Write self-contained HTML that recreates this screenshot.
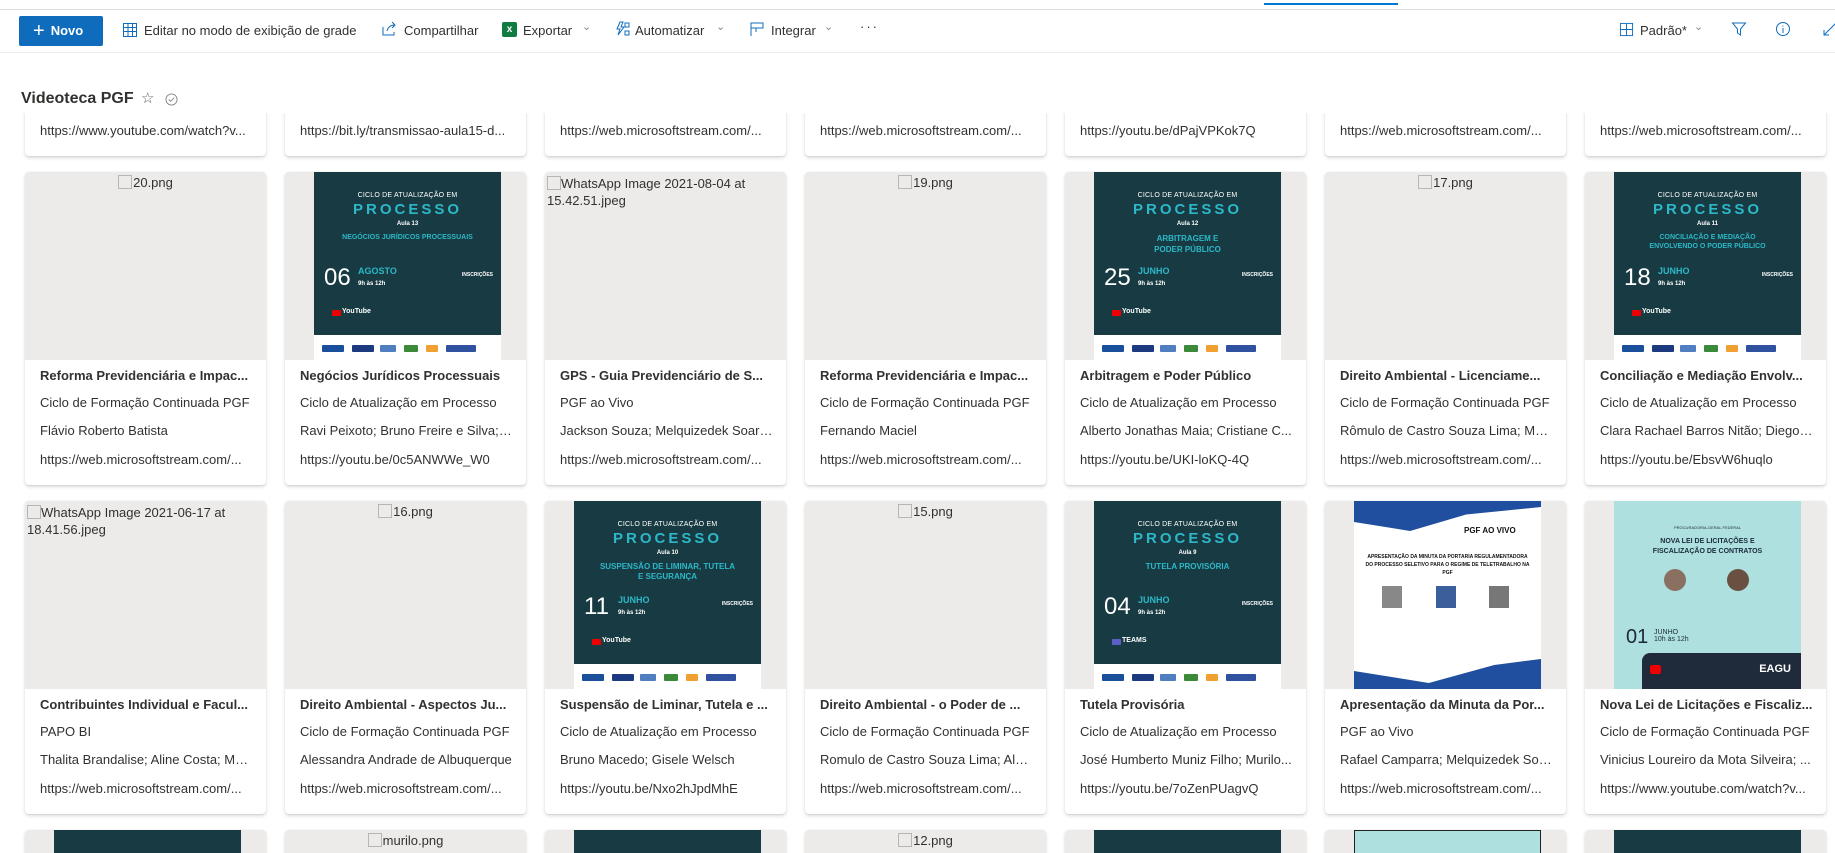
<!DOCTYPE html>
<html><head><meta charset="utf-8">
<style>
*{box-sizing:border-box;margin:0;padding:0}
html,body{width:1835px;height:853px;overflow:hidden}
body{background:#fff;font-family:"Liberation Sans","Segoe UI",sans-serif;color:#323130;position:relative}
#wrap{position:absolute;left:0;top:0;width:1835px;height:853px;overflow:hidden}
.hdr{position:absolute;left:0;top:0;width:1835px;height:113px;background:#fff;z-index:5}
.topline{position:absolute;left:0;top:9px;width:1835px;height:1px;background:#e1dfdd}
.cmdline{position:absolute;left:0;top:52px;width:1835px;height:1px;background:#edebe9}
.tab{position:absolute;left:1264px;top:3px;width:134px;height:2px;background:#0078d4}
.novo{position:absolute;left:19px;top:16px;width:84px;height:30px;background:#0f6cbd;border-radius:2px;color:#fff;font-size:13px;font-weight:bold;line-height:30px;padding-left:14px}
.novo span{font-size:20px;font-weight:normal;vertical-align:-2px;margin-right:6px}
.ci{position:absolute;top:23px;font-size:13px;color:#323130;line-height:16px;white-space:nowrap}
.chev{position:absolute;top:20px;font-size:11px;color:#8a8886}
.ttl{position:absolute;left:21px;top:90px;font-size:16px;font-weight:600;color:#323130}
.card{position:absolute;width:241px;height:313px;background:#fff;border-radius:4px;box-shadow:0 1.6px 3.6px rgba(0,0,0,.14),0 .3px .9px rgba(0,0,0,.11);overflow:hidden}
.card.last{height:23px;border-radius:4px 4px 0 0}
.im{position:absolute;left:0;top:0;width:241px;height:188px;background:#edebe9}
.ph{position:absolute;top:3px;left:0;width:100%;text-align:center;font-size:13px;color:#323130}
.ph i{display:inline-block;width:14px;height:14px;border:1px solid #b8b6b4;vertical-align:-2px;margin-right:1px}
.phl{position:absolute;top:3px;left:2px;width:230px;font-size:13px;line-height:17px;color:#323130}
.phl i{display:inline-block;width:14px;height:14px;border:1px solid #b8b6b4;vertical-align:-2px}
.t{position:absolute;left:15px;width:213px;font-size:13px;white-space:nowrap;overflow:hidden;text-overflow:ellipsis;line-height:18px}
.t1{top:195px;font-weight:bold}
.t2{top:222px}.t3{top:250px}.t4{top:279px}
.p{position:absolute;left:29px;top:0;width:187px;height:188px;background:#183a42;overflow:hidden;text-align:center;color:#fff}
.p .a{position:absolute;top:20px;width:100%;font-size:7px;letter-spacing:.2px}
.p .b{position:absolute;top:29px;width:100%;font-size:15px;font-weight:bold;color:#2cb8c8;letter-spacing:3px}
.p .c{position:absolute;top:49px;width:100%;font-size:6px;font-weight:bold}
.p .d{position:absolute;top:61px;width:100%;font-size:7px;font-weight:bold;color:#2cb8c8;line-height:9px}
.p .e{position:absolute;left:10px;top:92px;font-size:24px;color:#fff}
.p .f{position:absolute;left:44px;top:94px;font-size:9px;color:#2cb8c8;font-weight:bold;text-align:left;line-height:11px}
.p .f small{color:#fff;font-size:6px}
.p .yt{position:absolute;left:18px;top:138px;width:9px;height:6px;background:#e00;border-radius:1px}
.p .ytt{position:absolute;left:28px;top:136px;font-size:7px;font-weight:bold}
.p .ins{position:absolute;right:8px;top:100px;font-size:5px;font-weight:bold}
.p .strip{position:absolute;left:0;bottom:0;width:100%;height:25px;background:#fff}
.strip b{position:absolute;top:10px;height:7px;border-radius:1px}
</style></head><body><div id="wrap">
<div class="hdr">
<div class="topline"></div><div class="tab"></div><div class="cmdline"></div>
<div class="novo"><span>+</span>Novo</div>
<svg style="position:absolute;left:122px;top:22px" width="16" height="16" viewBox="0 0 16 16" fill="none" stroke="#0f6cbd"><rect x="1.5" y="1.5" width="13" height="13"/><path d="M1.5 5.5h13M1.5 9.5h13M6 1.5v13M10.5 1.5v13"/></svg>
<div class="ci" style="left:144px">Editar no modo de exibição de grade</div>
<svg style="position:absolute;left:381px;top:21px" width="16" height="16" viewBox="0 0 16 16" fill="none" stroke="#0f6cbd"><path d="M2 6v8h11v-3M6 10c1-4 4-6 8-6M11 1l3 3-3 3"/></svg>
<div class="ci" style="left:404px">Compartilhar</div>
<div style="position:absolute;left:502px;top:22px;width:15px;height:15px;background:#107c41;border-radius:2px;color:#fff;font-size:10px;font-weight:bold;text-align:center;line-height:15px">x</div>
<div class="ci" style="left:523px">Exportar</div><div class="chev" style="left:582px">&#8964;</div>
<svg style="position:absolute;left:615px;top:21px" width="16" height="16" viewBox="0 0 16 16" fill="none" stroke="#0f6cbd"><path d="M5 1L2 8h3l-2 6 6-8H6l2-5zM10 2h4v4h-4zM10 10h4v4h-4z"/></svg>
<div class="ci" style="left:635px">Automatizar</div><div class="chev" style="left:716px">&#8964;</div>
<svg style="position:absolute;left:749px;top:21px" width="16" height="16" viewBox="0 0 16 16" fill="none" stroke="#0f6cbd"><path d="M2 2h12v5H2zM2 7v8M7 7v4"/></svg>
<div class="ci" style="left:771px">Integrar</div><div class="chev" style="left:824px">&#8964;</div>
<div class="ci" style="left:860px;top:19px;letter-spacing:2px">···</div>
<svg style="position:absolute;left:1619px;top:22px" width="15" height="15" viewBox="0 0 16 16" fill="none" stroke="#0f6cbd"><rect x="1.5" y="1.5" width="13" height="13"/><path d="M1.5 8h13M8 1.5v13"/></svg>
<div class="ci" style="left:1640px">Padrão*</div><div class="chev" style="left:1694px">&#8964;</div>
<svg style="position:absolute;left:1731px;top:21px" width="16" height="16" viewBox="0 0 16 16" fill="none" stroke="#0f6cbd"><path d="M1.5 2h13l-5 6v6l-3-2V8z"/></svg>
<svg style="position:absolute;left:1775px;top:21px" width="16" height="16" viewBox="0 0 16 16" fill="none" stroke="#0f6cbd"><circle cx="8" cy="8" r="6.5"/><path d="M8 7v5M8 4.5v1"/></svg>
<svg style="position:absolute;left:1822px;top:21px" width="16" height="16" viewBox="0 0 16 16" fill="none" stroke="#0f6cbd"><path d="M2 14L14 2M2 9v5h5"/></svg>
<div class="ttl">Videoteca PGF</div>
<div style="position:absolute;left:141px;top:89px;font-size:15px;color:#605e5c">☆</div>
<svg style="position:absolute;left:165px;top:93px" width="13" height="13" viewBox="0 0 14 14" fill="none" stroke="#8a8886"><circle cx="7" cy="7" r="6"/><path d="M4 7l2 2 4-4"/></svg>
</div>

<div class="card" style="left:25px;top:-157px"><div class="t t4">https://www.youtube.com/watch?v...</div></div>
<div class="card" style="left:285px;top:-157px"><div class="t t4">https://bit.ly/transmissao-aula15-d...</div></div>
<div class="card" style="left:545px;top:-157px"><div class="t t4">https://web.microsoftstream.com/...</div></div>
<div class="card" style="left:805px;top:-157px"><div class="t t4">https://web.microsoftstream.com/...</div></div>
<div class="card" style="left:1065px;top:-157px"><div class="t t4">https://youtu.be/dPajVPKok7Q</div></div>
<div class="card" style="left:1325px;top:-157px"><div class="t t4">https://web.microsoftstream.com/...</div></div>
<div class="card" style="left:1585px;top:-157px"><div class="t t4">https://web.microsoftstream.com/...</div></div>

<div class="card" style="left:25px;top:172px"><div class="im"><div class="ph"><i></i>20.png</div></div>
<div class="t t1">Reforma Previdenciária e Impac...</div><div class="t t2">Ciclo de Formação Continuada PGF</div><div class="t t3">Flávio Roberto Batista</div><div class="t t4">https://web.microsoftstream.com/...</div></div>
<div class="card" style="left:285px;top:172px"><div class="im"><div class="p"><div class="a">CICLO DE ATUALIZAÇÃO EM</div><div class="b">PROCESSO</div><div class="c">Aula 13</div><div class="d">NEGÓCIOS JURÍDICOS PROCESSUAIS</div><div class="e">06</div><div class="f">AGOSTO<br><small>9h às 12h</small></div><div class="ins">INSCRIÇÕES</div><div class="yt"></div><div class="ytt">YouTube</div><div class="strip"><b style="left:8px;width:22px;background:#1a4f9c"></b><b style="left:38px;width:22px;background:#1b3a80"></b><b style="left:66px;width:16px;background:#4f7fc0"></b><b style="left:90px;width:14px;background:#3a8a3a"></b><b style="left:112px;width:12px;background:#f0a030"></b><b style="left:132px;width:30px;background:#3050a0"></b></div></div></div>
<div class="t t1">Negócios Jurídicos Processuais</div><div class="t t2">Ciclo de Atualização em Processo</div><div class="t t3">Ravi Peixoto; Bruno Freire e Silva; ...</div><div class="t t4">https://youtu.be/0c5ANWWe_W0</div></div>
<div class="card" style="left:545px;top:172px"><div class="im"><div class="phl"><i></i>WhatsApp Image 2021-08-04 at 15.42.51.jpeg</div></div>
<div class="t t1">GPS - Guia Previdenciário de S...</div><div class="t t2">PGF ao Vivo</div><div class="t t3">Jackson Souza; Melquizedek Soare...</div><div class="t t4">https://web.microsoftstream.com/...</div></div>
<div class="card" style="left:805px;top:172px"><div class="im"><div class="ph"><i></i>19.png</div></div>
<div class="t t1">Reforma Previdenciária e Impac...</div><div class="t t2">Ciclo de Formação Continuada PGF</div><div class="t t3">Fernando Maciel</div><div class="t t4">https://web.microsoftstream.com/...</div></div>
<div class="card" style="left:1065px;top:172px"><div class="im"><div class="p"><div class="a">CICLO DE ATUALIZAÇÃO EM</div><div class="b">PROCESSO</div><div class="c">Aula 12</div><div class="d" style="font-size:8px;line-height:11px">ARBITRAGEM E<br>PODER PÚBLICO</div><div class="e">25</div><div class="f">JUNHO<br><small>9h às 12h</small></div><div class="ins">INSCRIÇÕES</div><div class="yt"></div><div class="ytt">YouTube</div><div class="strip"><b style="left:8px;width:22px;background:#1a4f9c"></b><b style="left:38px;width:22px;background:#1b3a80"></b><b style="left:66px;width:16px;background:#4f7fc0"></b><b style="left:90px;width:14px;background:#3a8a3a"></b><b style="left:112px;width:12px;background:#f0a030"></b><b style="left:132px;width:30px;background:#3050a0"></b></div></div></div>
<div class="t t1">Arbitragem e Poder Público</div><div class="t t2">Ciclo de Atualização em Processo</div><div class="t t3">Alberto Jonathas Maia; Cristiane C...</div><div class="t t4">https://youtu.be/UKI-loKQ-4Q</div></div>
<div class="card" style="left:1325px;top:172px"><div class="im"><div class="ph"><i></i>17.png</div></div>
<div class="t t1">Direito Ambiental - Licenciame...</div><div class="t t2">Ciclo de Formação Continuada PGF</div><div class="t t3">Rômulo de Castro Souza Lima; Mar...</div><div class="t t4">https://web.microsoftstream.com/...</div></div>
<div class="card" style="left:1585px;top:172px"><div class="im"><div class="p"><div class="a">CICLO DE ATUALIZAÇÃO EM</div><div class="b">PROCESSO</div><div class="c">Aula 11</div><div class="d">CONCILIAÇÃO E MEDIAÇÃO<br>ENVOLVENDO O PODER PÚBLICO</div><div class="e">18</div><div class="f">JUNHO<br><small>9h às 12h</small></div><div class="ins">INSCRIÇÕES</div><div class="yt"></div><div class="ytt">YouTube</div><div class="strip"><b style="left:8px;width:22px;background:#1a4f9c"></b><b style="left:38px;width:22px;background:#1b3a80"></b><b style="left:66px;width:16px;background:#4f7fc0"></b><b style="left:90px;width:14px;background:#3a8a3a"></b><b style="left:112px;width:12px;background:#f0a030"></b><b style="left:132px;width:30px;background:#3050a0"></b></div></div></div>
<div class="t t1">Conciliação e Mediação Envolv...</div><div class="t t2">Ciclo de Atualização em Processo</div><div class="t t3">Clara Rachael Barros Nitão; Diego ...</div><div class="t t4">https://youtu.be/EbsvW6huqlo</div></div>

<div class="card" style="left:25px;top:501px"><div class="im"><div class="phl"><i></i>WhatsApp Image 2021-06-17 at 18.41.56.jpeg</div></div>
<div class="t t1">Contribuintes Individual e Facul...</div><div class="t t2">PAPO BI</div><div class="t t3">Thalita Brandalise; Aline Costa; Ma...</div><div class="t t4">https://web.microsoftstream.com/...</div></div>
<div class="card" style="left:285px;top:501px"><div class="im"><div class="ph"><i></i>16.png</div></div>
<div class="t t1">Direito Ambiental - Aspectos Ju...</div><div class="t t2">Ciclo de Formação Continuada PGF</div><div class="t t3">Alessandra Andrade de Albuquerque</div><div class="t t4">https://web.microsoftstream.com/...</div></div>
<div class="card" style="left:545px;top:501px"><div class="im"><div class="p"><div class="a">CICLO DE ATUALIZAÇÃO EM</div><div class="b">PROCESSO</div><div class="c">Aula 10</div><div class="d" style="font-size:8px;line-height:10px">SUSPENSÃO DE LIMINAR, TUTELA<br>E SEGURANÇA</div><div class="e">11</div><div class="f">JUNHO<br><small>9h às 12h</small></div><div class="ins">INSCRIÇÕES</div><div class="yt"></div><div class="ytt">YouTube</div><div class="strip"><b style="left:8px;width:22px;background:#1a4f9c"></b><b style="left:38px;width:22px;background:#1b3a80"></b><b style="left:66px;width:16px;background:#4f7fc0"></b><b style="left:90px;width:14px;background:#3a8a3a"></b><b style="left:112px;width:12px;background:#f0a030"></b><b style="left:132px;width:30px;background:#3050a0"></b></div></div></div>
<div class="t t1">Suspensão de Liminar, Tutela e ...</div><div class="t t2">Ciclo de Atualização em Processo</div><div class="t t3">Bruno Macedo; Gisele Welsch</div><div class="t t4">https://youtu.be/Nxo2hJpdMhE</div></div>
<div class="card" style="left:805px;top:501px"><div class="im"><div class="ph"><i></i>15.png</div></div>
<div class="t t1">Direito Ambiental - o Poder de ...</div><div class="t t2">Ciclo de Formação Continuada PGF</div><div class="t t3">Romulo de Castro Souza Lima; Ales...</div><div class="t t4">https://web.microsoftstream.com/...</div></div>
<div class="card" style="left:1065px;top:501px"><div class="im"><div class="p"><div class="a">CICLO DE ATUALIZAÇÃO EM</div><div class="b">PROCESSO</div><div class="c">Aula 9</div><div class="d" style="font-size:8px">TUTELA PROVISÓRIA</div><div class="e">04</div><div class="f">JUNHO<br><small>9h às 12h</small></div><div class="ins">INSCRIÇÕES</div><div class="yt" style="background:#5b5fc7"></div><div class="ytt">TEAMS</div><div class="strip"><b style="left:8px;width:22px;background:#1a4f9c"></b><b style="left:38px;width:22px;background:#1b3a80"></b><b style="left:66px;width:16px;background:#4f7fc0"></b><b style="left:90px;width:14px;background:#3a8a3a"></b><b style="left:112px;width:12px;background:#f0a030"></b><b style="left:132px;width:30px;background:#3050a0"></b></div></div></div>
<div class="t t1">Tutela Provisória</div><div class="t t2">Ciclo de Atualização em Processo</div><div class="t t3">José Humberto Muniz Filho; Murilo...</div><div class="t t4">https://youtu.be/7oZenPUagvQ</div></div>
<div class="card" style="left:1325px;top:501px"><div class="im"><div class="p" style="background:#fff;color:#111">
<div style="position:absolute;left:0;top:0;width:187px;height:30px;background:#1f4f9e;clip-path:polygon(0 0,100% 0,100% 20%,60% 45%,30% 100%,0 70%)"></div>
<div style="position:absolute;left:0;bottom:0;width:187px;height:30px;background:#1f4f9e;clip-path:polygon(0 40%,40% 80%,75% 20%,100% 0,100% 100%,0 100%)"></div>
<div style="position:absolute;left:110px;top:25px;font-size:8px;font-weight:bold">PGF AO VIVO</div>
<div style="position:absolute;left:10px;top:52px;width:167px;font-size:5px;font-weight:bold;line-height:8px">APRESENTAÇÃO DA MINUTA DA PORTARIA REGULAMENTADORA DO PROCESSO SELETIVO PARA O REGIME DE TELETRABALHO NA PGF</div>
<div style="position:absolute;left:28px;top:85px;width:20px;height:22px;background:#888"></div><div style="position:absolute;left:82px;top:85px;width:20px;height:22px;background:#3a5f9a"></div><div style="position:absolute;left:135px;top:85px;width:20px;height:22px;background:#777"></div>
</div></div>
<div class="t t1">Apresentação da Minuta da Por...</div><div class="t t2">PGF ao Vivo</div><div class="t t3">Rafael Camparra; Melquizedek Soa...</div><div class="t t4">https://web.microsoftstream.com/...</div></div>
<div class="card" style="left:1585px;top:501px"><div class="im"><div class="p" style="background:#aee0df;color:#1b2a3a">
<div style="position:absolute;top:24px;width:100%;font-size:4px">PROCURADORIA-GERAL FEDERAL</div>
<div style="position:absolute;top:36px;width:100%;font-size:7px;font-weight:bold;line-height:10px">NOVA LEI DE LICITAÇÕES E<br>FISCALIZAÇÃO DE CONTRATOS</div>
<div style="position:absolute;left:50px;top:68px;width:22px;height:22px;border-radius:50%;background:#8a7060"></div><div style="position:absolute;left:113px;top:68px;width:22px;height:22px;border-radius:50%;background:#6a5040"></div>
<div style="position:absolute;left:12px;top:125px;font-size:20px">01</div><div style="position:absolute;left:40px;top:128px;font-size:7px;text-align:left">JUNHO<br>10h às 12h</div>
<div style="position:absolute;left:28px;top:152px;width:159px;height:36px;background:#1f2b3a;border-radius:8px 0 0 0"><div style="position:absolute;left:8px;top:12px;width:11px;height:9px;background:#e00;border-radius:2px"></div><div style="position:absolute;right:10px;top:10px;color:#fff;font-size:11px;font-weight:bold">EAGU</div></div>
</div></div>
<div class="t t1">Nova Lei de Licitações e Fiscaliz...</div><div class="t t2">Ciclo de Formação Continuada PGF</div><div class="t t3">Vinicius Loureiro da Mota Silveira; ...</div><div class="t t4">https://www.youtube.com/watch?v...</div></div>

<div class="card last" style="left:25px;top:830px"><div class="im"><div class="p"></div></div></div>
<div class="card last" style="left:285px;top:830px"><div class="im"><div class="ph"><i></i>murilo.png</div></div></div>
<div class="card last" style="left:545px;top:830px"><div class="im"><div class="p"></div></div></div>
<div class="card last" style="left:805px;top:830px"><div class="im"><div class="ph"><i></i>12.png</div></div></div>
<div class="card last" style="left:1065px;top:830px"><div class="im"><div class="p"></div></div></div>
<div class="card last" style="left:1325px;top:830px"><div class="im"><div class="p" style="background:#aee0df;border:1px solid #222"></div></div></div>
<div class="card last" style="left:1585px;top:830px"><div class="im"><div class="p"></div></div></div>
</div></body></html>
